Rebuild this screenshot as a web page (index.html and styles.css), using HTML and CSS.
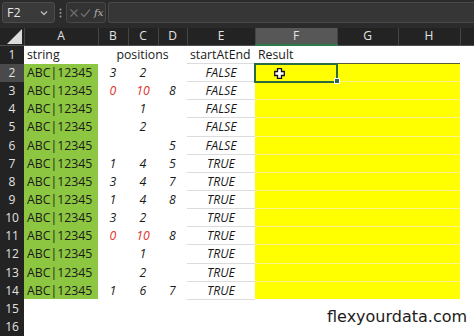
FILE: index.html
```html
<!DOCTYPE html>
<html lang="en">
<head>
    <meta charset="UTF-8">
    <title>startAtEnd</title>
    <link rel="stylesheet" href="styles.css">
</head>
<body>

<div class="app">
    <div class="topbar">
        <div class="namebox">
            <span>F2</span>
            <svg width="8" height="6" viewBox="0 0 8 6"><polyline points="1,1.5 4,4.5 7,1.5" fill="none" stroke="#bbb" stroke-width="1.3"/></svg>
        </div>
        <svg class="dots" width="3" height="10" viewBox="0 0 3 10"><circle cx="1.5" cy="1.5" r="1" fill="#999"/><circle cx="1.5" cy="5" r="1" fill="#999"/><circle cx="1.5" cy="8.5" r="1" fill="#999"/></svg>
        <div class="fxbox">
            <svg width="10" height="10" viewBox="0 0 10 10"><path d="M1.5 1.5 L8.5 8.5 M8.5 1.5 L1.5 8.5" stroke="#6f6f6f" stroke-width="1.2"/></svg>
            <svg width="11" height="10" viewBox="0 0 11 10"><polyline points="1,5.5 4,8.5 10,1.5" fill="none" stroke="#6f6f6f" stroke-width="1.2"/></svg>
            <span class="fx">fx</span>
        </div>
        <div class="formulabar"></div>
    </div>

    <table class="sheet">
        <colgroup>
            <col style="width:24px">
            <col style="width:74px">
            <col style="width:30px">
            <col style="width:30px">
            <col style="width:29px">
            <col style="width:68px">
            <col style="width:82px">
            <col style="width:61px">
            <col style="width:62px">
            <col style="width:14px">
        </colgroup>
        <thead>
            <tr>
                <th class="corner"><svg width="16" height="16" viewBox="0 0 16 16"><polygon points="15,1 15,16 0,16" fill="#dcdcdc"/></svg></th>
                <th>A</th>
                <th>B</th>
                <th>C</th>
                <th>D</th>
                <th>E</th>
                <th class="sel">F</th>
                <th>G</th>
                <th>H</th>
                <th></th>
            </tr>
        </thead>
        <tbody>
            <tr>
                <th>1</th>
                <td class="t">string</td>
                <td class="t mid" colspan="3">positions</td>
                <td class="t e">startAtEnd</td>
                <td class="t">Result</td>
                <td></td><td></td><td></td>
            </tr>
            <tr>
                <th class="sel">2</th>
                <td class="a">ABC|12345</td>
                <td class="n">3</td><td class="n">2</td><td class="n"></td>
                <td class="e">FALSE</td>
                <td class="y top active"><svg class="cursor" width="11" height="11" viewBox="0 0 11 11"><polygon points="3.5,0.7 7.5,0.7 7.5,3.5 10.3,3.5 10.3,7.5 7.5,7.5 7.5,10.3 3.5,10.3 3.5,7.5 0.7,7.5 0.7,3.5 3.5,3.5" fill="#fff" stroke="#111" stroke-width="1.3"/></svg></td>
                <td class="y top"></td><td class="y top"></td><td></td>
            </tr>
            <tr>
                <th>3</th>
                <td class="a">ABC|12345</td>
                <td class="n red">0</td><td class="n red">10</td><td class="n">8</td>
                <td class="e">FALSE</td>
                <td class="y"></td><td class="y"></td><td class="y"></td><td></td>
            </tr>
            <tr>
                <th>4</th>
                <td class="a">ABC|12345</td>
                <td class="n"></td><td class="n">1</td><td class="n"></td>
                <td class="e">FALSE</td>
                <td class="y"></td><td class="y"></td><td class="y"></td><td></td>
            </tr>
            <tr>
                <th>5</th>
                <td class="a">ABC|12345</td>
                <td class="n"></td><td class="n">2</td><td class="n"></td>
                <td class="e">FALSE</td>
                <td class="y"></td><td class="y"></td><td class="y"></td><td></td>
            </tr>
            <tr>
                <th>6</th>
                <td class="a">ABC|12345</td>
                <td class="n"></td><td class="n"></td><td class="n">5</td>
                <td class="e">FALSE</td>
                <td class="y"></td><td class="y"></td><td class="y"></td><td></td>
            </tr>
            <tr>
                <th>7</th>
                <td class="a">ABC|12345</td>
                <td class="n">1</td><td class="n">4</td><td class="n">5</td>
                <td class="e">TRUE</td>
                <td class="y"></td><td class="y"></td><td class="y"></td><td></td>
            </tr>
            <tr>
                <th>8</th>
                <td class="a">ABC|12345</td>
                <td class="n">3</td><td class="n">4</td><td class="n">7</td>
                <td class="e">TRUE</td>
                <td class="y"></td><td class="y"></td><td class="y"></td><td></td>
            </tr>
            <tr>
                <th>9</th>
                <td class="a">ABC|12345</td>
                <td class="n">1</td><td class="n">4</td><td class="n">8</td>
                <td class="e">TRUE</td>
                <td class="y"></td><td class="y"></td><td class="y"></td><td></td>
            </tr>
            <tr>
                <th>10</th>
                <td class="a">ABC|12345</td>
                <td class="n">3</td><td class="n">2</td><td class="n"></td>
                <td class="e">TRUE</td>
                <td class="y"></td><td class="y"></td><td class="y"></td><td></td>
            </tr>
            <tr>
                <th>11</th>
                <td class="a">ABC|12345</td>
                <td class="n red">0</td><td class="n red">10</td><td class="n">8</td>
                <td class="e">TRUE</td>
                <td class="y"></td><td class="y"></td><td class="y"></td><td></td>
            </tr>
            <tr>
                <th>12</th>
                <td class="a">ABC|12345</td>
                <td class="n"></td><td class="n">1</td><td class="n"></td>
                <td class="e">TRUE</td>
                <td class="y"></td><td class="y"></td><td class="y"></td><td></td>
            </tr>
            <tr>
                <th>13</th>
                <td class="a">ABC|12345</td>
                <td class="n"></td><td class="n">2</td><td class="n"></td>
                <td class="e">TRUE</td>
                <td class="y"></td><td class="y"></td><td class="y"></td><td></td>
            </tr>
            <tr>
                <th>14</th>
                <td class="a">ABC|12345</td>
                <td class="n">1</td><td class="n">6</td><td class="n">7</td>
                <td class="e">TRUE</td>
                <td class="y last"></td><td class="y last"></td><td class="y last"></td><td></td>
            </tr>
            <tr>
                <th>15</th>
                <td></td><td></td><td></td><td></td><td></td><td></td><td></td><td></td><td></td>
            </tr>
            <tr>
                <th>16</th>
                <td></td><td></td><td></td><td></td><td></td><td></td><td></td><td></td><td></td>
            </tr>
        </tbody>
    </table>

    <div class="mark">flexyourdata.com</div>
</div>

</body>
</html>
```

FILE: styles.css
```css
body {
    margin: 0;
    background-color: #fff;
    font-family: "Open Sans", "Noto Sans", sans-serif;
}

.app {
    position: relative;
    width: 474px;
    height: 336px;
    overflow: hidden;
}

/* formula bar */
.topbar {
    height: 28px;
    background-color: #2b2b2b;
    display: flex;
    align-items: flex-start;
    padding: 2px 0 0 2px;
    box-sizing: border-box;
    gap: 0;
}

.namebox {
    width: 53px;
    height: 21px;
    box-sizing: border-box;
    background-color: #3a3a3a;
    border: 1px solid #4c4c4c;
    border-radius: 3px;
    display: flex;
    align-items: center;
    justify-content: space-between;
    padding: 0 6px 0 4px;
    color: #e6e6e6;
    font-size: 12.5px;
}

.dots {
    margin: 6px 4px 0 4px;
}

.fxbox {
    width: 40px;
    height: 21px;
    box-sizing: border-box;
    background-color: #333;
    border: 1px solid #474747;
    border-radius: 3px;
    display: flex;
    align-items: center;
    gap: 1px;
    padding-left: 2px;
}

.fx {
    font-family: "DejaVu Serif", serif;
    font-style: italic;
    font-size: 10px;
    color: #b8b8b8;
    margin-left: 2px;
}

.formulabar {
    flex: 1;
    height: 21px;
    margin-left: 2px;
    box-sizing: border-box;
    background-color: #363636;
    border: 1px solid #4a4a4a;
    border-right: none;
    border-radius: 3px 0 0 3px;
}

/* grid */
.sheet {
    table-layout: fixed;
    width: 474px;
    border-collapse: collapse;
    border-spacing: 0;
    font-size: 12.3px;
    color: #1a1a1a;
}

.sheet th {
    background-color: #232323;
    color: #e2e2e2;
    font-weight: normal;
    font-size: 12px;
    padding: 0;
    text-align: center;
}

.sheet thead tr {
    height: 17px;
}

.sheet thead th {
    border-right: 1px solid #454545;
    border-bottom: 1px solid #4e4e4e;
    line-height: 16px;
}

.sheet thead th.sel {
    background-color: #575757;
    border-bottom: 2px solid #2f7a4c;
}

.corner svg {
    display: block;
    margin: 0 0 0 7px;
}

.sheet tbody tr {
    height: 18.15px;
}

.sheet tbody th.sel {
    background-color: #4a4a4a;
}

.sheet td {
    padding: 0 3px;
    white-space: nowrap;
    line-height: 17px;
}

.t {
    text-align: left;
}

.mid {
    text-align: center;
}

.a {
    background-color: #8dc641;
}

.n {
    font-style: italic;
    text-align: center;
    background-color: #fff;
}

.red {
    color: #e2352b;
}

.e {
    font-style: italic;
    text-align: center;
    border-bottom: 1px solid #dcdcdc;
}

td.t.e {
    font-style: normal;
    text-align: left;
}

.y {
    background-color: #ffff00;
    border-bottom: 1px solid #f6f68a;
}

.y.top {
    border-top: 1px solid #5b5b3a;
}

.y.last {
    border-bottom: none;
}

.active {
    position: relative;
    outline: 2px solid #2a6b41;
    outline-offset: -1px;
}

.active::after {
    content: "";
    position: absolute;
    right: -3px;
    bottom: -3px;
    width: 4px;
    height: 4px;
    background-color: #2a6b41;
    border: 1px solid #fff;
}

.cursor {
    position: absolute;
    left: 19px;
    top: 4px;
}

.mark {
    position: absolute;
    left: 327px;
    top: 307px;
    font-family: "DejaVu Sans", sans-serif;
    font-size: 16px;
    line-height: 20px;
    color: #1c1c1c;
}
```
